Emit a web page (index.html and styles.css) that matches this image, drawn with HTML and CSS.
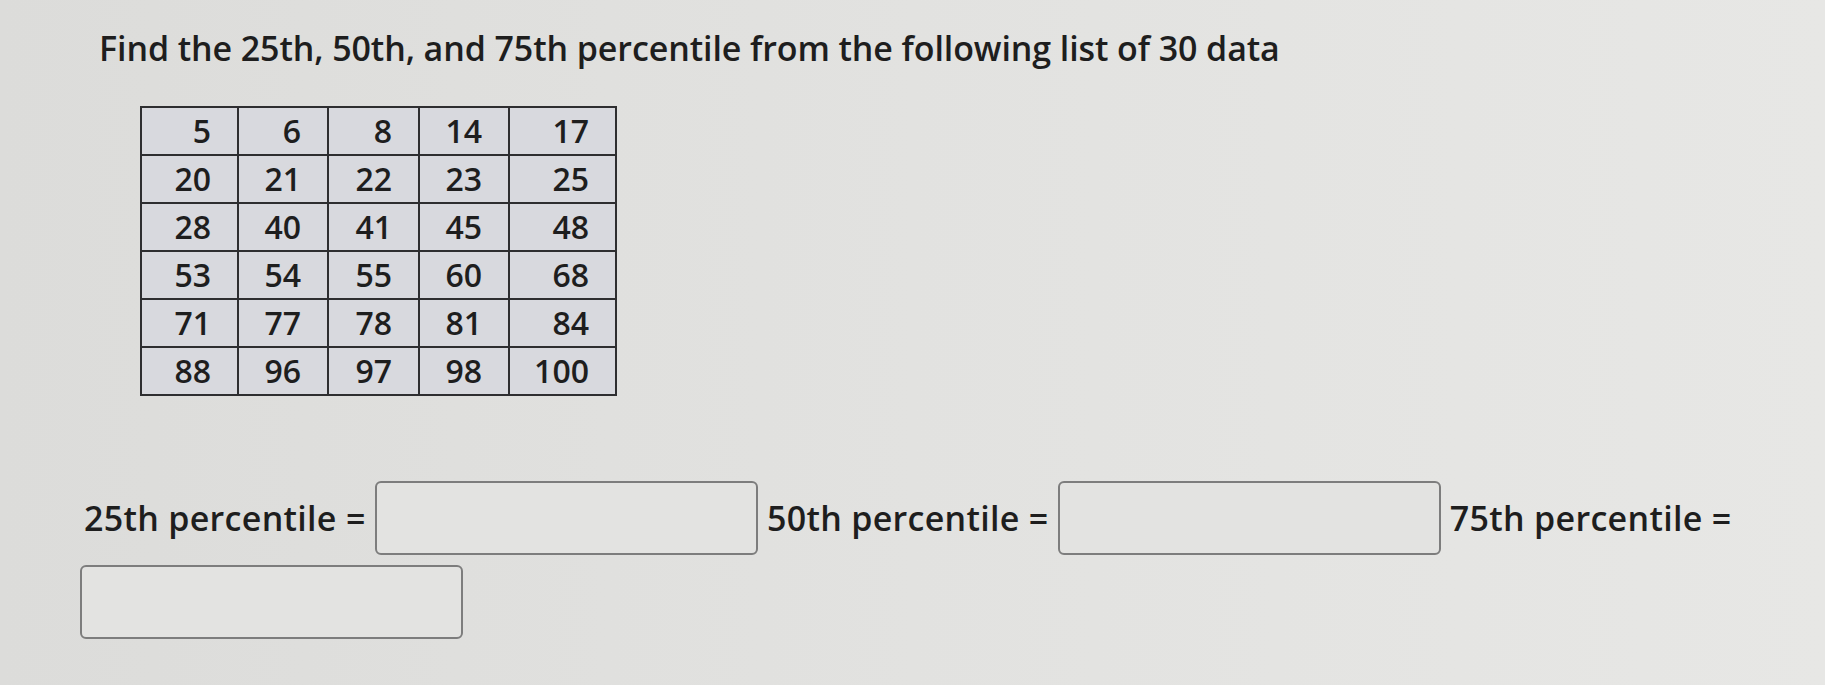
FILE: index.html
```html
<!DOCTYPE html>
<html lang="en">
<head>
<meta charset="utf-8">
<title>Percentiles</title>
<link rel="stylesheet" href="styles.css">
</head>
<body>
<main class="page">
  <p class="title">Find the 25th, 50th, and 75th percentile from the following list of 30 data</p>
  <table class="data">
    <colgroup>
      <col class="c1"><col class="c2"><col class="c3"><col class="c4"><col class="c5">
    </colgroup>
    <tbody>
      <tr><td>5</td><td>6</td><td>8</td><td>14</td><td>17</td></tr>
      <tr><td>20</td><td>21</td><td>22</td><td>23</td><td>25</td></tr>
      <tr><td>28</td><td>40</td><td>41</td><td>45</td><td>48</td></tr>
      <tr><td>53</td><td>54</td><td>55</td><td>60</td><td>68</td></tr>
      <tr><td>71</td><td>77</td><td>78</td><td>81</td><td>84</td></tr>
      <tr><td>88</td><td>96</td><td>97</td><td>98</td><td>100</td></tr>
    </tbody>
  </table>
  <div class="answers">
    <span class="label">25th percentile =</span>
    <span class="box"></span>
    <span class="label">50th percentile =</span>
    <span class="box"></span>
    <span class="label">75th percentile =</span>
    <span class="box"></span>
  </div>
</main>
</body>
</html>
```

FILE: styles.css
```css
html, body {
  margin: 0;
  padding: 0;
}

body {
  width: 1825px;
  height: 685px;
  overflow: hidden;
  background: linear-gradient(to right, #dcdcda 0%, #e2e2e0 50%, #e7e7e5 100%);
  color: #1e1e1e;
  font-family: "Open Sans", Lato, sans-serif;
  font-weight: 600;
}

.page {
  padding-top: 25px;
}

.title {
  margin: 0 0 0 99px;
  font-size: 34px;
  line-height: 46px;
  letter-spacing: -0.1px;
}

.data {
  margin: 35px 0 0 140px;
  border-collapse: collapse;
  border: 2px solid #2e2e30;
  background: #d8d9de;
  font-size: 32px;
}

.c1 { width: 97px; }
.c2 { width: 90px; }
.c3 { width: 91px; }
.c4 { width: 90px; }
.c5 { width: 107px; }

.data td {
  height: 46px;
  padding: 0 26px 0 0;
  border: 2px solid #2e2e30;
  text-align: right;
  vertical-align: middle;
  line-height: 1;
}

.answers {
  margin: 78px 0 0 84px;
  font-size: 34px;
  line-height: 80px;
  width: 1700px;
  letter-spacing: 0.3px;
}

.label {
  vertical-align: middle;
}

.box {
  display: inline-block;
  vertical-align: middle;
  width: 379px;
  height: 70px;
  border: 2px solid #7d7d7d;
  border-radius: 6px;
  background: #e3e3e1;
}

.box:last-child {
  margin-left: -4px;
}
```
